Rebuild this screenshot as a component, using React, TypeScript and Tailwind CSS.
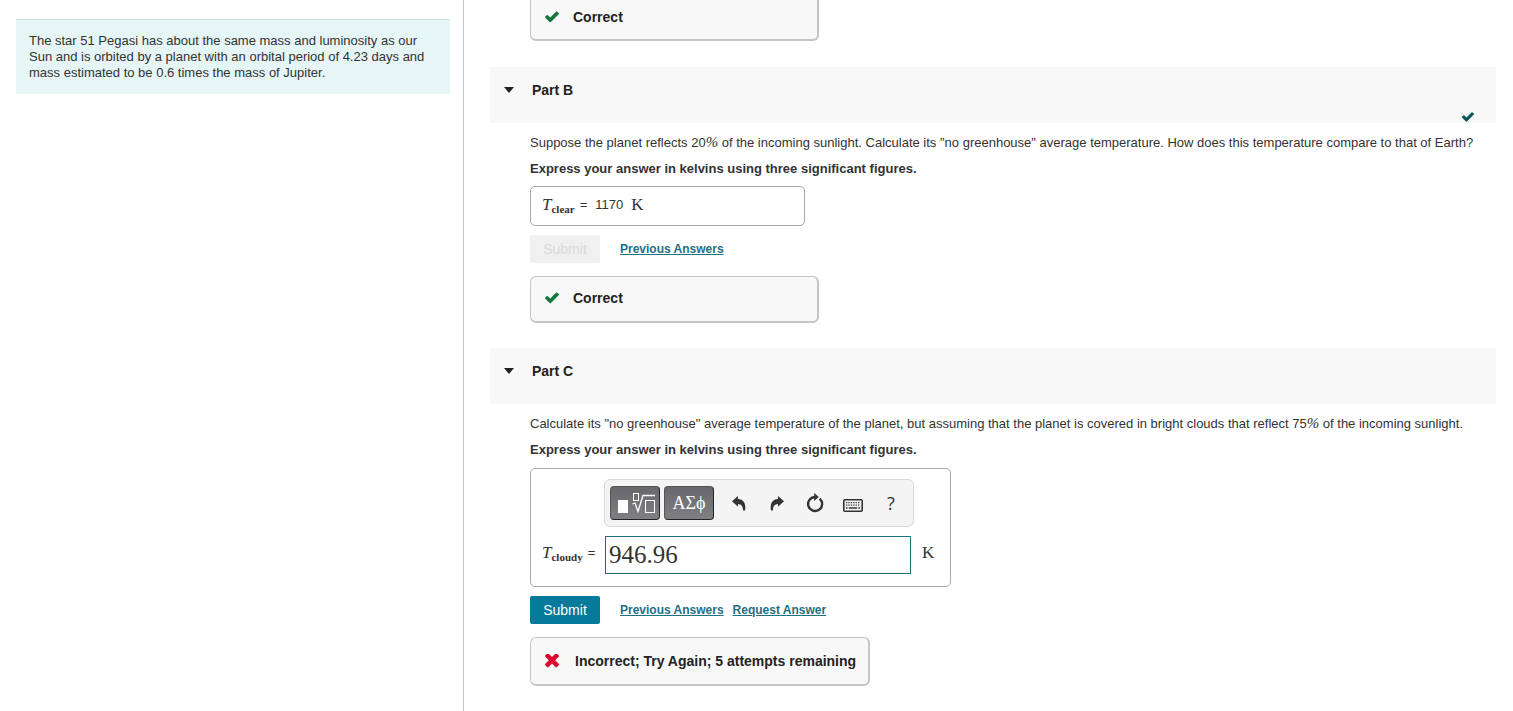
import { useState, type ReactNode } from "react";

function CheckIcon({ className }: { className?: string }) {
  return (
    <svg viewBox="0 0 1792 1792" fill="currentColor" className={className} aria-hidden="true">
      <path d="M1671 520q0 40-28 68l-724 724-150 150q-28 28-68 28t-68-28l-150-150-334-334q-28-28-28-68t28-68l150-150q28-28 68-28t68 28l266 267 642-643q28-28 68-28t68 28l164 136q28 28 28 68z" />
    </svg>
  );
}

function CrossIcon({ className }: { className?: string }) {
  return (
    <svg viewBox="302 430 1188 1188" fill="currentColor" className={className} aria-hidden="true">
      <path d="M1490 1322q0 40-28 68l-136 136q-28 28-68 28t-68-28l-294-294-294 294q-28 28-68 28t-68-28l-136-136q-28-28-28-68t28-68l294-294-294-294q-28-28-28-68t28-68l136-136q28-28 68-28t68 28l294 294 294-294q28-28 68-28t68 28l136 136q28 28 28 68t-28 68l-294 294 294 294q28 28 28 68z" />
    </svg>
  );
}

function ArrowIcon({ className }: { className?: string }) {
  return (
    <svg viewBox="0 0 14 15" fill="currentColor" className={className} aria-hidden="true">
      <path d="M0 5.2L6 0V3C11 3.2 14.4 7 13 14.6H11C11.2 10.6 9.4 8.2 6 8.1V10.8Z" />
    </svg>
  );
}

function ResetIcon() {
  return (
    <svg viewBox="0 0 18 20" fill="none" className="h-5 w-[18px]" aria-hidden="true">
      <path d="M13.6 5.6A7 7 0 1 1 9 4" stroke="currentColor" strokeWidth="2.4" />
      <path d="M8.2 0L12.8 4L8.2 8Z" fill="currentColor" />
    </svg>
  );
}

function KeyboardIcon() {
  return (
    <svg viewBox="0 0 20 13" fill="none" stroke="currentColor" className="h-[13px] w-5" aria-hidden="true">
      <rect x="0.8" y="0.8" width="18.4" height="11.4" rx="1" strokeWidth="1.6" />
      <path d="M3 3.7H17M3 6.2H17" strokeWidth="1.2" strokeDasharray="1.3 1.1" />
      <path d="M3 9H4.6M5.8 9H14.2M15.4 9H17" strokeWidth="1.4" />
    </svg>
  );
}

function TemplateIcon() {
  return (
    <svg viewBox="0 0 40 24" fill="none" stroke="white" className="h-6 w-10" aria-hidden="true">
      <rect x="3" y="9" width="10" height="13" fill="white" stroke="none" />
      <rect x="18.5" y="2.5" width="5" height="7" />
      <path d="M17.5 13L20 12L23 20.5L28 4.5H40" strokeWidth="1.3" />
      <rect x="30.5" y="9.5" width="9" height="12" />
    </svg>
  );
}

function Variable({ sub }: { sub: string }) {
  return (
    <span className="font-['Liberation_Serif',serif] text-[17px] leading-5">
      <i>T</i>
      <span className="align-[-3px] text-[11px] leading-none font-bold">{sub}</span>
    </span>
  );
}

function Unit() {
  return <span className="font-['Liberation_Serif',serif] text-[17px] leading-5">K</span>;
}

function Percent() {
  return <span className="font-['Liberation_Serif',serif] text-[15px] leading-4 italic">%</span>;
}

function Feedback({ className, children }: { className: string; children: ReactNode }) {
  return (
    <div
      className={`flex items-center rounded-md border border-r-2 border-b-2 border-[#c5c5c5] bg-[#f8f8f8] text-sm font-bold text-[#222] ${className}`}
    >
      {children}
    </div>
  );
}

function Part({ title, done, children }: { title: string; done?: boolean; children: ReactNode }) {
  const [open, setOpen] = useState(true);

  return (
    <section className="mt-[25px]">
      <header className="flex h-14 justify-between bg-[#f8f8f8] pr-[21px] pl-[14px]">
        <h2 className="pt-[13px]">
          <button
            type="button"
            aria-expanded={open}
            onClick={() => setOpen(!open)}
            className="flex items-center gap-[18px] text-sm leading-5 font-bold text-[#222]"
          >
            <svg viewBox="0 0 10 6" fill="currentColor" className="h-[6px] w-[10px]" aria-hidden="true">
              <path d="M0 0H10L5 6Z" />
            </svg>
            {title}
          </button>
        </h2>
        {done && <CheckIcon className="-mb-px size-[14px] self-end text-[#0b545b]" />}
      </header>
      {open && <div className="pt-[11px] pl-10">{children}</div>}
    </section>
  );
}

function AnswerLink({ children }: { children: ReactNode }) {
  return (
    <a href="#" className="text-xs font-bold text-[#1f6f85] underline">
      {children}
    </a>
  );
}

const toolClass = "flex h-8 w-[38px] items-center justify-center text-[#333]";
const paletteClass =
  "flex h-[34px] w-[50px] items-center justify-center rounded border border-[#555] border-r-[#222] border-b-[#222] bg-linear-to-b from-[#68686c] to-[#808084] text-white";

export default function App() {
  const [answer, setAnswer] = useState("946.96");

  return (
    <div className="flex min-h-screen bg-white font-['Liberation_Sans',Arial,sans-serif] text-[13px] leading-4 text-[#333]">
      <aside className="w-[464px] shrink-0 border-r border-[#c0c4cc] pt-[19px] pr-[13px] pl-4">
        <p className="border-t border-[#cfe0e1] bg-[#e6f5f6] px-[13px] py-[13px]">
          The star 51 Pegasi has about the same mass and luminosity as our Sun and is orbited by a
          planet with an orbital period of 4.23 days and mass estimated to be 0.6 times the mass of
          Jupiter.
        </p>
      </aside>

      <main className="min-w-0 flex-1 pr-[17px] pl-[26px]">
        <div className="pb-px pl-10">
          <Feedback className="h-[41px] w-[289px] gap-[13px] rounded-t-none border-t-0 pb-[5px] pl-[13px]">
            <CheckIcon className="size-4 text-[#14773c]" />
            Correct
          </Feedback>
        </div>

        <Part title="Part B" done>
          <p>
            Suppose the planet reflects 20
            <Percent /> of the incoming sunlight. Calculate its "no greenhouse" average temperature.
            How does this temperature compare to that of Earth?
          </p>
          <p className="mt-[10px] font-bold">
            Express your answer in kelvins using three significant figures.
          </p>
          <div className="mt-[9px] flex h-10 w-[275px] items-center rounded-[5px] border border-[#a9a9a9] pb-[2px] pl-[11px]">
            <Variable sub="clear" />
            <span className="ml-[5px]">=</span>
            <span className="ml-2">1170</span>
            <span className="ml-2">
              <Unit />
            </span>
          </div>
          <div className="mt-[9px] flex items-center gap-5">
            <button
              type="button"
              disabled
              className="h-7 w-[70px] rounded-xs bg-[#f0f0f0] text-sm text-[#d8d8d8]"
            >
              Submit
            </button>
            <AnswerLink>Previous Answers</AnswerLink>
          </div>
          <Feedback className="mt-[13px] h-[47px] w-[289px] gap-[13px] pb-[2px] pl-[13px]">
            <CheckIcon className="size-4 text-[#14773c]" />
            Correct
          </Feedback>
        </Part>

        <Part title="Part C">
          <p>
            Calculate its "no greenhouse" average temperature of the planet, but assuming that the
            planet is covered in bright clouds that reflect 75
            <Percent /> of the incoming sunlight.
          </p>
          <p className="mt-[10px] font-bold">
            Express your answer in kelvins using three significant figures.
          </p>
          <div className="mt-[10px] w-[421px] rounded-[5px] border border-[#a9a9a9] pt-[10px] pb-3 pl-[11px]">
            <div className="ml-[62px] flex h-12 w-[310px] items-center rounded-md border border-[#d8d8d8] bg-[#f4f4f4] pl-[5px]">
              <button type="button" aria-label="Templates" className={paletteClass}>
                <TemplateIcon />
              </button>
              <button
                type="button"
                className={`ml-1 mr-[6px] font-['Liberation_Serif',serif] text-[18px] ${paletteClass}`}
              >
                ΑΣϕ
              </button>
              <button type="button" aria-label="Undo" className={toolClass}>
                <ArrowIcon className="h-[15px] w-[14px]" />
              </button>
              <button type="button" aria-label="Redo" className={toolClass}>
                <ArrowIcon className="h-[15px] w-[14px] -scale-x-100" />
              </button>
              <button type="button" aria-label="Reset" className={toolClass}>
                <ResetIcon />
              </button>
              <button type="button" aria-label="Keyboard shortcuts" className={`pt-1 ${toolClass}`}>
                <KeyboardIcon />
              </button>
              <button
                type="button"
                aria-label="Help"
                className={`font-['Open_Sans',sans-serif] text-[18px] ${toolClass}`}
              >
                ?
              </button>
            </div>
            <div className="mt-[9px] flex items-center">
              <label htmlFor="cloudy" className="flex w-[63px] items-center gap-[5px] pb-1">
                <Variable sub="cloudy" />
                <span>=</span>
              </label>
              <input
                id="cloudy"
                type="text"
                value={answer}
                onChange={(e) => setAnswer(e.target.value)}
                className="h-[38px] w-[306px] border border-[#1f6f7d] bg-white px-[3px] font-['Liberation_Serif',serif] text-[25px] outline-none"
              />
              <span className="ml-[11px] pb-1">
                <Unit />
              </span>
            </div>
          </div>
          <div className="mt-[9px] flex items-center">
            <button type="button" className="mr-5 h-7 w-[70px] rounded-xs bg-[#057a9b] text-sm text-white">
              Submit
            </button>
            <div className="flex gap-[9px]">
              <AnswerLink>Previous Answers</AnswerLink>
              <AnswerLink>Request Answer</AnswerLink>
            </div>
          </div>
          <Feedback className="mt-[13px] h-[49px] w-[340px] gap-4 pl-[14px]">
            <CrossIcon className="size-[14px] text-[#d9082e]" />
            Incorrect; Try Again; 5 attempts remaining
          </Feedback>
        </Part>
      </main>
    </div>
  );
}
